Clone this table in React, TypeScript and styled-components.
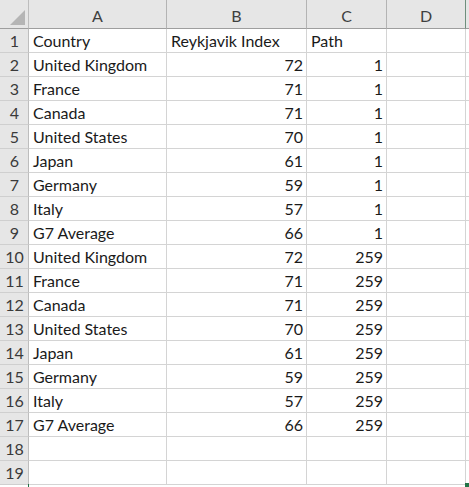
import React from "react";
import styled, { createGlobalStyle } from "styled-components";

const Global = createGlobalStyle`
  html, body { margin: 0; padding: 0; background: #ffffff; }
  body { font-family: Lato, "Open Sans", sans-serif; overflow: hidden; }
`;

const Sheet = styled.div`
  position: relative;
  display: grid;
  grid-template-columns: 29px 138px 140px 80px 79px 3px;
  grid-auto-rows: 24px;
  grid-template-rows: 29px;
  width: 469px;
  height: 487px;
  overflow: hidden;
  background: #ffffff;
`;

const Corner = styled.div`
  position: relative;
  background: #e6e6e6;
  border-right: 1px solid #bdbdbd;
  border-bottom: 1px solid #9e9e9e;
  box-sizing: border-box;
`;

const Triangle = styled.div`
  position: absolute;
  right: 3px;
  bottom: 3px;
  width: 0;
  height: 0;
  border-left: 15px solid transparent;
  border-bottom: 15px solid #b5b5b5;
`;

const ColHead = styled.div<{ $edge?: boolean }>`
  background: #e6e6e6;
  border-right: 1px solid ${(p) => (p.$edge ? "#6f8f7c" : "#b3b3b3")};
  border-bottom: 1px solid #9e9e9e;
  box-sizing: border-box;
  display: flex;
  align-items: center;
  justify-content: center;
  padding-top: 2px;
  font-size: 16px;
  color: #3f3f3f;
`;

const RowHead = styled.div`
  background: #e6e6e6;
  border-right: 1px solid #bdbdbd;
  border-bottom: 1px solid #cfcfcf;
  box-sizing: border-box;
  display: flex;
  align-items: flex-end;
  justify-content: center;
  padding-bottom: 2px;
  padding-left: 1px;
  font-size: 16px;
  line-height: 18px;
  color: #3a3a3a;
`;

const Cell = styled.div<{ $num?: boolean }>`
  border-right: 1px solid #d4d4d4;
  border-bottom: 1px solid #d4d4d4;
  box-sizing: border-box;
  display: flex;
  align-items: flex-end;
  justify-content: ${(p) => (p.$num ? "flex-end" : "flex-start")};
  padding: 0 3px 2px 4px;
  font-size: 16px;
  line-height: 18px;
  color: #1a1a1a;
  white-space: nowrap;
  overflow: visible;
`;

const Spill = styled.div`
  border-bottom: 1px solid #d4d4d4;
  box-sizing: border-box;
`;

const SpillHead = styled.div`
  background: #e6e6e6;
  border-bottom: 1px solid #9e9e9e;
  box-sizing: border-box;
`;

const FillHandle = styled.div`
  position: absolute;
  left: 465px;
  top: 483px;
  width: 5px;
  height: 5px;
  background: #217346;
`;

const SelEdge = styled.div`
  position: absolute;
  left: 28px;
  top: 484px;
  width: 1px;
  height: 4px;
  background: #217346;
`;

type Row = [string, string, string];

const rows: Row[] = [
  ["Country", "Reykjavik Index", "Path"],
  ["United Kingdom", "72", "1"],
  ["France", "71", "1"],
  ["Canada", "71", "1"],
  ["United States", "70", "1"],
  ["Japan", "61", "1"],
  ["Germany", "59", "1"],
  ["Italy", "57", "1"],
  ["G7 Average", "66", "1"],
  ["United Kingdom", "72", "259"],
  ["France", "71", "259"],
  ["Canada", "71", "259"],
  ["United States", "70", "259"],
  ["Japan", "61", "259"],
  ["Germany", "59", "259"],
  ["Italy", "57", "259"],
  ["G7 Average", "66", "259"],
  ["", "", ""],
  ["", "", ""],
];

export default function App() {
  return (
    <>
      <Global />
      <Sheet>
        <Corner>
          <Triangle />
        </Corner>
        <ColHead>A</ColHead>
        <ColHead>B</ColHead>
        <ColHead>C</ColHead>
        <ColHead $edge>D</ColHead>
        <SpillHead />
        {rows.map((r, i) => {
          const header = i === 0;
          return (
            <React.Fragment key={i}>
              <RowHead>{i + 1}</RowHead>
              <Cell>{r[0]}</Cell>
              <Cell $num={!header}>{r[1]}</Cell>
              <Cell $num={!header}>{r[2]}</Cell>
              <Cell />
              <Spill />
            </React.Fragment>
          );
        })}
        <SelEdge />
        <FillHandle />
      </Sheet>
    </>
  );
}
